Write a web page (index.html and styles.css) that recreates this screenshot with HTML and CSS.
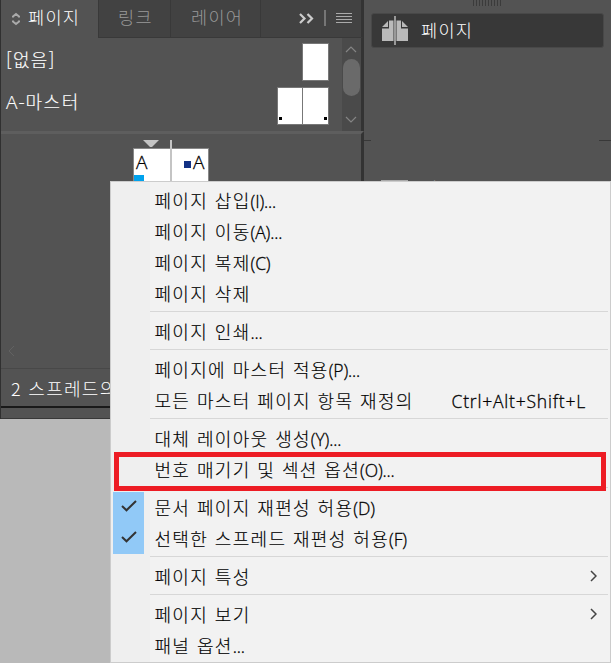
FILE: index.html
```html
<!DOCTYPE html>
<html lang="ko">
<head>
<meta charset="utf-8">
<title>페이지</title>
<link rel="stylesheet" href="styles.css">
</head>
<body>
<div class="app">
  <div class="workspace">
    <section class="panel">
      <header class="tabs">
        <div class="tab tab-active">
          <svg class="sorter" width="8" height="14" viewBox="0 0 8 14"><path d="M1 5.500V4.500L4 2l3 2.500v1M1 8.500v1L4 12l3-2.500v-1"/></svg>
          <span>페이지</span>
        </div>
        <div class="tab tab-link">링크</div>
        <div class="tab tab-layer">레이어</div>
        <div class="tab-tools">
          <svg width="60" height="20" viewBox="0 0 60 20">
            <path class="chevrons" d="M1 5l4.500 4.500L1 14M8.500 5L13 9.500 8.500 14"/>
            <path class="bar" d="M26 1v16"/>
            <path class="lines" d="M37 4.500h16M37 7.500h16M37 10.500h16M37 13.500h16"/>
          </svg>
        </div>
      </header>
      <div class="masters">
        <div class="master-list">
          <div class="master"><span>[없음]</span><div class="spread"><i></i></div></div>
          <div class="master"><span><b>A-</b>마스터</span><div class="spread marked"><i></i><i></i></div></div>
        </div>
        <div class="scrollbar">
          <svg width="12" height="7" viewBox="0 0 12 7"><path d="M1 6l5-5 5 5"/></svg>
          <div class="thumb"></div>
          <svg width="12" height="7" viewBox="0 0 12 7"><path d="M1 1l5 5 5-5"/></svg>
        </div>
      </div>
      <div class="pages">
        <div class="page-spread">
          <svg class="pointer" width="16" height="8" viewBox="0 0 16 8"><path d="M0 0h16L9 7H7z"/></svg>
          <div class="leaf leaf-left">A<i></i></div>
          <div class="spine"></div>
          <div class="leaf leaf-right"><i></i>A</div>
        </div>
        <svg class="back" width="7" height="12" viewBox="0 0 7 12"><path d="M6 1L1 6l5 5"/></svg>
      </div>
      <footer class="status">2 스프레드의</footer>
      <div class="panel-foot"></div>
    </section>
    <aside class="dock">
      <div class="grip"></div>
      <div class="dock-item">
        <svg width="28" height="30" viewBox="0 0 28 30">
          <path class="sheet" d="M8 4.500h4.500V25H1V12.500h7zM20 4.500h-4.500V25H27V12.500h-7z"/>
          <path class="sheet" d="M7 5v6H1zM21 5v6h6z"/>
          <path class="fold" d="M14 0v29"/>
        </svg>
        <span>페이지</span>
      </div>
      <div class="dock-rule"><i></i><i></i></div>
      <div class="dock-next"><i class="clip-icon"></i><span>링크</span></div>
    </aside>
  </div>
  <nav class="menu">
    <div class="item">페이지 삽입<span class="key">(I)...</span></div>
    <div class="item">페이지 이동<span class="key">(A)...</span></div>
    <div class="item">페이지 복제<span class="key">(C)</span></div>
    <div class="item">페이지 삭제</div>
    <hr>
    <div class="item">페이지 인쇄<span class="key">...</span></div>
    <hr>
    <div class="item">페이지에 마스터 적용<span class="key">(P)...</span></div>
    <div class="item">모든 마스터 페이지 항목 재정의<span class="shortcut">Ctrl+Alt+Shift+L</span></div>
    <hr>
    <div class="item">대체 레이아웃 생성<span class="key">(Y)...</span></div>
    <div class="item">번호 매기기 및 섹션 옵션<span class="key">(O)...</span></div>
    <hr>
    <div class="item checked"><svg class="check" width="16" height="12" viewBox="0 0 16 12"><path d="M1 6l4.500 4.300L15 1"/></svg><span>문서 페이지 재편성 허용</span><span class="key">(D)</span></div>
    <div class="item checked"><svg class="check" width="16" height="12" viewBox="0 0 16 12"><path d="M1 6l4.500 4.300L15 1"/></svg><span>선택한 스프레드 재편성 허용</span><span class="key">(F)</span></div>
    <hr>
    <div class="item">페이지 특성<svg class="more" width="7" height="12" viewBox="0 0 7 12"><path d="M1 1l5 5-5 5"/></svg></div>
    <hr>
    <div class="item">페이지 보기<svg class="more" width="7" height="12" viewBox="0 0 7 12"><path d="M1 1l5 5-5 5"/></svg></div>
    <div class="item">패널 옵션<span class="key">...</span></div>
    <div class="highlight"></div>
  </nav>
</div>
</body>
</html>
```
FILE: styles.css
```css
* { box-sizing: border-box; }
body {
  margin: 0;
  font: 300 18px "Noto Sans CJK KR", sans-serif;
  letter-spacing: 1.3px;
  background: #b9b9b9;
}
svg { display: block; flex: none; }
path { fill: none; }
i { display: block; font-style: normal; }
.app { position: relative; width: 611px; height: 663px; overflow: hidden; }
.workspace { display: flex; height: 419px; }

.panel {
  width: 364px;
  display: flex;
  flex-direction: column;
  background: #535353;
  border-left: 1px solid #303030;
  color: #fff;
}
.tabs {
  display: flex;
  height: 38px;
  width: 363px;
  background: #424242;
  border-right: 3px solid #333;
  border-bottom: 1px solid #393939;
}
.tab {
  height: 37px;
  padding-top: 3px;
  line-height: 27px;
  border-right: 1px solid #393939;
  color: #999;
  font-size: 17.5px;
}
.tab-active { width: 98px; height: 38px; display: flex; gap: 8px; padding-left: 11px; background: #535353; color: #fff; }
.sorter { margin-top: 9px; }
.sorter path { stroke: #aaa; stroke-width: 2; }
.tab-link { width: 72px; padding-left: 19px; }
.tab-layer { width: 90px; padding-left: 20px; }
.tab-tools { padding: 9px 0 0 38px; }
.chevrons { stroke: #ccc; stroke-width: 2.2; }
.bar { stroke: #888; stroke-width: 1.5; }
.lines { stroke: #aaa; stroke-width: 1.2; }

.masters { display: flex; height: 93px; border-right: 3px solid #333; }
.master-list { width: 341px; padding: 5px 13px 0 5px; }
.master { display: flex; justify-content: space-between; height: 44px; line-height: 34px; }
.master > span { margin-top: -1px; -webkit-text-stroke: .15px; }
.master + .master > span { margin-top: -3px; letter-spacing: 1.5px; }
.master b { font: 300 19px "Open Sans", sans-serif; letter-spacing: 1px; }
.spread { display: flex; height: 38px; border: 1px solid #777; background: #fff; }
.spread i { width: 24px; }
.spread i:only-child { width: 25px; }
.spread i + i { width: 26px; border-left: 1px solid #777; }
.marked { background: linear-gradient(#000, #000) 1px 29px / 3px 3px no-repeat, linear-gradient(#000, #000) 46px 29px / 3px 3px no-repeat, #fff; }
.scrollbar {
  width: 19px;
  display: flex;
  flex-direction: column;
  align-items: center;
  gap: 6px;
  padding: 8px 1px 0 0;
  background: #4a4a4a;
}
.scrollbar path { stroke: #858585; stroke-width: 1.2; }
.thumb { width: 17px; height: 37px; border-radius: 9px; background: #6a6a6a; }
.scrollbar .thumb + svg { margin-top: 14px; }

.pages {
  height: 237px;
  display: flex;
  flex-direction: column;
  border-top: 3px solid #5e5e5e;
  border-right: 3px solid #333;
}
.page-spread { position: relative; display: flex; align-items: flex-end; height: 55px; margin: 6px 0 0 132px; color: #000; font: 300 19px/27px "Open Sans", sans-serif; letter-spacing: 0; -webkit-text-stroke: .3px; }
.pointer { position: absolute; left: 10px; top: 0; }
.pointer path { fill: #c4c4c4; }
.leaf { width: 37px; height: 47px; background: #fff; border: 1px solid #888; border-right: 0; padding-left: 2px; position: relative; }
.leaf-left i { position: absolute; left: 0; top: 26px; width: 10px; height: 7px; background: #00a2ed; }
.spine { width: 2px; height: 55px; background: #c4c4c4; }
.leaf-right { border-left: 0; border-right: 1px solid #888; display: flex; gap: 2px; padding-left: 12px; }
.leaf-right i { width: 7px; height: 7px; margin-top: 12px; background: #123184; }
.back { margin: 150px 0 0 7px; }
.back path { stroke: #626262; }
.status { height: 38px; border-top: 1px solid #484848; border-right: 3px solid #333; padding: 1px 0 0 10px; line-height: 36px; white-space: nowrap; }
.panel-foot { height: 13px; border-top: 2px solid #191919; border-bottom: 1px solid #383838; background: #535353; }

.dock { width: 247px; background: #535353; border-bottom: 1px solid #383838; color: #fff; }
.grip { width: 29px; height: 6px; margin-left: 109px; background: repeating-linear-gradient(90deg, #3b3b3b 0 1px, #535353 1px 3px); }
.dock-item {
  display: flex;
  align-items: center;
  gap: 12px;
  width: 233px;
  height: 35px;
  margin: 7px 0 0 7px;
  padding-left: 9px;
  background: #383838;
  border: 1px solid #484848;
  border-radius: 3px;
  line-height: 29px;
  font-size: 17.5px;
}
.dock-item span { margin-top: -2px; }
.sheet { fill: #bababa; }
.fold { stroke: #999; stroke-width: 2; }
.dock-rule { display: flex; justify-content: space-between; margin-top: 92px; }
.dock-rule i { width: 7px; height: 1px; background: #383838; }
.dock-rule i + i { width: 12px; }
.dock-next { display: flex; gap: 13px; padding: 39px 0 0 17px; height: 60px; line-height: 16px; }
.clip-icon { width: 27px; height: 4px; background: #aaa; }

.menu {
  position: absolute;
  left: 110px;
  top: 181px;
  width: 501px;
  height: 482px;
  padding: 3px 2px 0;
  background: linear-gradient(90deg, #efefef 39px, #f2f2f2 39px);
  border: 1px solid #ccc;
  color: #000;
  word-spacing: .4px;
  -webkit-text-stroke: .15px;
}
.item { display: flex; align-items: center; height: 31px; padding-left: 41.500px; line-height: 30px; padding-bottom: 1px; white-space: pre; }
.key { padding-top: 2px; font: 300 17.5px "Open Sans", sans-serif; letter-spacing: -.15px; -webkit-text-stroke: .3px; }
.shortcut { margin-left: auto; margin-right: 22px; padding-top: 1px; font: 300 17.5px "Open Sans", sans-serif; letter-spacing: .8px; -webkit-text-stroke: .3px; }
hr { height: 7px; margin: 0 0 0 37px; border: 0; background: linear-gradient(#d7d7d7, #d7d7d7) 0 2px / 100% 1px no-repeat; }
.checked { padding: 0; }
.checked span { margin-top: -1px; }
.check { width: 31px; height: 31px; margin-right: 10.500px; padding: 8px 7px 11px 8px; background: #91c9f7; }
.check path { stroke: #333; stroke-width: 2; }
.more { margin: 0 11px 0 auto; }
.more path { stroke: #444; stroke-width: 1.5; }
.highlight { position: absolute; left: 3px; top: 270px; width: 492px; height: 39px; border: 5px solid #ed1c24; }
```
